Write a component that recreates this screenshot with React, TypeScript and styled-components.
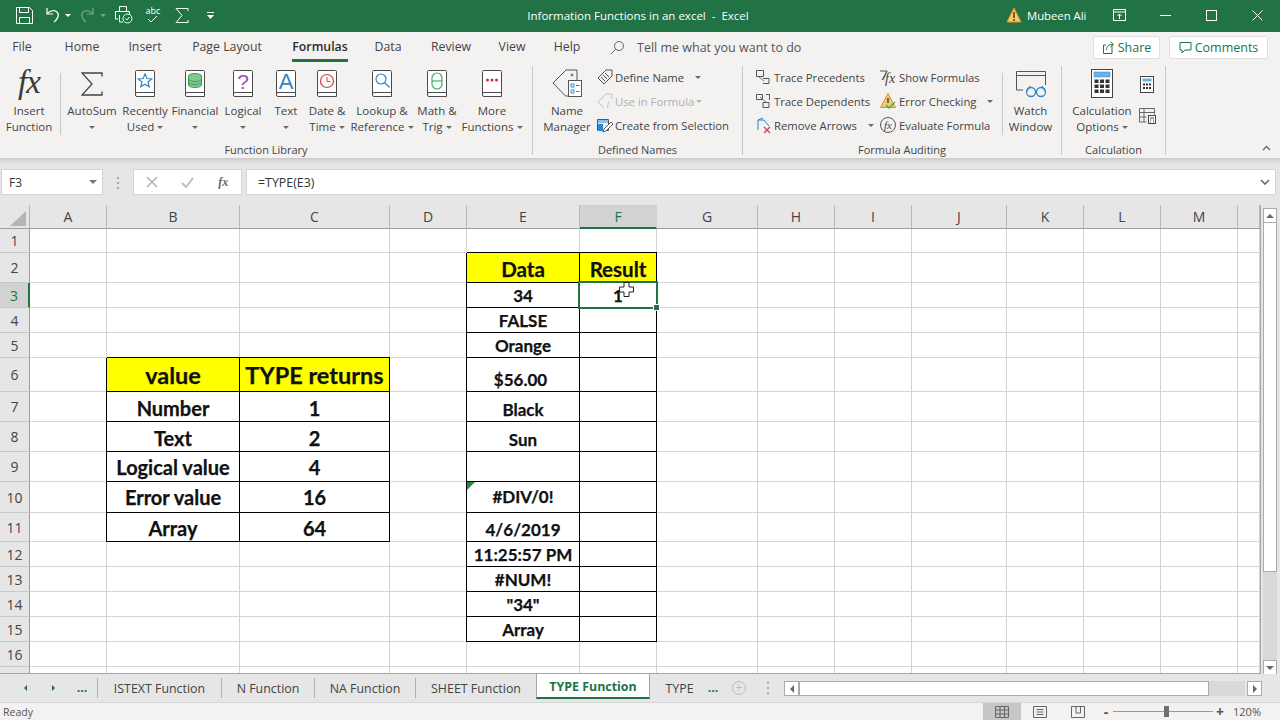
import React from "react";
import styled, { createGlobalStyle } from "styled-components";

const GREEN = "#217346";
const UI = `"Open Sans", "Noto Sans", sans-serif`;

const Global = createGlobalStyle`
  html, body { margin: 0; padding: 0; width: 1280px; height: 720px; overflow: hidden; background: #e6e6e6; }
  * { box-sizing: border-box; }
  svg { display: block; }
`;

const Window = styled.div`
  width: 1280px; height: 720px; display: flex; flex-direction: column;
  font-family: ${UI}; overflow: hidden;
`;

/* ---------- title bar ---------- */
const TitleBar = styled.div`
  height: 32px; background: ${GREEN}; color: #fff; display: flex; align-items: center; flex: none; padding-bottom: 2px;
`;
const Qat = styled.div`
  width: 520px; padding-left: 12px; display: flex; align-items: center; flex: none;
`;
const QatSlot = styled.div<{ $w: number; $ml?: number }>`
  width: ${p => p.$w}px; margin-left: ${p => p.$ml ?? 0}px; height: 24px;
  display: flex; align-items: center; justify-content: center; flex: none;
`;
const Title = styled.div`
  width: 236px; text-align: center; font-size: 11.5px; white-space: pre; flex: none;
`;
const TitleRight = styled.div`
  flex: 1; display: flex; align-items: center; justify-content: flex-end;
`;
const UserName = styled.span`
  font-size: 11.3px; margin: 0 12px 0 5px; width: 58px; white-space: nowrap;
`;
const WinBtn = styled.div`
  width: 45.75px; height: 30px; display: flex; align-items: center; justify-content: center; flex: none;
`;
const MirrorSvg = styled.svg`
  transform: scaleX(-1);
`;

/* ---------- tabs ---------- */
const TabRow = styled.div`
  height: 30px; background: #f3f2f1; display: flex; align-items: stretch; flex: none;
  color: #444; font-size: 12.3px;
`;
const MenuTab = styled.div<{ $w: number }>`
  width: ${p => p.$w}px; display: flex; justify-content: center; flex: none;
`;
const MenuLabel = styled.span<{ $active?: boolean }>`
  display: flex; align-items: center; height: 30px; white-space: nowrap;
  padding-bottom: 1px;
  color: ${p => (p.$active ? "#2b2b2b" : "#444")};
  font-weight: ${p => (p.$active ? 600 : 400)};
  border-bottom: 3px solid ${p => (p.$active ? GREEN : "transparent")};
  border-top: 3px solid transparent;
`;
const TellMe = styled.div`
  display: flex; align-items: center; gap: 12px; margin-left: 18px; color: #555; font-size: 12.5px; white-space: nowrap;
`;
const TopActions = styled.div`
  margin-left: auto; display: flex; align-items: center; gap: 9px; padding: 0 12px 0 0;
`;
const ActionBtn = styled.div<{ $w: number }>`
  width: ${p => p.$w}px; height: 23px; background: #fff; border: 1px solid #e1dfdd; border-radius: 2px;
  display: flex; align-items: center; justify-content: center; gap: 3px;
  color: ${GREEN}; font-size: 12.5px; font-weight: 500; white-space: nowrap;
`;

/* ---------- ribbon ---------- */
const Ribbon = styled.div`
  height: 96px; background: #f3f2f1; display: flex; align-items: stretch; flex: none;
  color: #444; font-size: 11.5px; padding-top: 4px;
`;
const RibbonShadow = styled.div`
  height: 8px; flex: none; background: linear-gradient(#c9c9c9, #dcdcdc 40%, #e6e6e6);
`;
const Group = styled.div<{ $w: number }>`
  width: ${p => p.$w}px; flex: none; display: flex; flex-direction: column;
  border-right: 1px solid #c8c8c8; margin-bottom: 3px;
`;
const GroupBody = styled.div<{ $pl?: number }>`
  height: 77px; display: flex; align-items: flex-start; padding-left: ${p => p.$pl ?? 0}px; flex: none;
`;
const GroupLabel = styled.div`
  flex: 1; text-align: center; font-size: 11px; line-height: 14px; color: #444;
  white-space: nowrap;
`;
const BigBtn = styled.div<{ $w: number }>`
  width: ${p => p.$w}px; flex: none; display: flex; flex-direction: column; align-items: center;
`;
const BigIcon = styled.div`
  height: 32px; display: flex; align-items: flex-end; justify-content: center; margin-bottom: 5px;
`;
const BigText = styled.div`
  line-height: 16px; text-align: center; white-space: nowrap; display: flex; align-items: center; justify-content: center; height: 16px;
`;
const Caret = styled.i<{ $ml?: number; $light?: boolean }>`
  display: inline-block; width: 0; height: 0; flex: none; margin-left: ${p => p.$ml ?? 3}px;
  border-left: 3px solid transparent; border-right: 3px solid transparent;
  border-top: 3px solid ${p => (p.$light ? "#b5b5b5" : "#6a6a6a")};
`;
const WhiteCaret = styled.i`
  display: block; width: 0; height: 0;
  border-left: 3px solid transparent; border-right: 3px solid transparent; border-top: 3px solid #fff;
`;
const DimCaret = styled(WhiteCaret)`
  border-top-color: #6ea88a;
`;
const FxGlyph = styled.span`
  font-family: "Liberation Serif", serif; font-style: italic; font-size: 33px; line-height: 32px; color: #3a3a3a; letter-spacing: -1px;
`;
const InnerSep = styled.div<{ $ml?: number; $mr?: number }>`
  width: 1px; height: 62px; background: #c8c8c8; margin: 7px ${p => p.$mr ?? 0}px 0 ${p => p.$ml ?? 0}px; flex: none;
`;
const SmallCol = styled.div<{ $w: number }>`
  width: ${p => p.$w}px; flex: none; display: flex; flex-direction: column; margin-top: -1px; font-size: 11.3px;
`;
const SmallBtn = styled.div<{ $off?: boolean }>`
  height: 24px; display: flex; align-items: center; white-space: nowrap;
  color: ${p => (p.$off ? "#b0b0b0" : "#444")};
`;
const SmallIcon = styled.div<{ $mr?: number }>`
  width: 18px; height: 18px; margin-right: ${p => p.$mr ?? 1}px; display: flex; align-items: center; justify-content: center; flex: none;
`;
const MiniCol = styled.div`
  width: 20px; display: flex; flex-direction: column; align-items: center; gap: 15px; padding-top: 10px; flex: none; margin-left: -1px;
`;
const Collapse = styled.div`
  margin-left: auto; padding: 79px 9px 0 0;
`;

/* ---------- formula bar ---------- */
const FormulaBar = styled.div`
  height: 39px; background: #e6e6e6; flex: none; display: flex; align-items: flex-start; padding: 3px 4px 0 1px;
`;
const FieldBox = styled.div<{ $w?: number }>`
  height: 26px; background: #fff; border: 1px solid #d4d4d4; display: flex; align-items: center;
  ${p => (p.$w ? `width:${p.$w}px; flex:none;` : "flex:1;")}
`;
const NameText = styled.span`
  font-size: 12px; color: #333; margin-left: 7px; flex: 1;
`;
const Grip = styled.div`
  width: 30px; flex: none; display: flex; flex-direction: column; align-items: center; gap: 3px; padding-top: 8px;
`;
const GripDot = styled.i`
  width: 2px; height: 2px; background: #a8a8a8; display: block;
`;
const FxBtn = styled.div`
  flex: 1; display: flex; justify-content: center;
`;
const FxSmall = styled.span`
  font-family: "Liberation Serif", serif; font-style: italic; font-weight: 700; font-size: 12px; color: #666;
`;
const FormulaText = styled.span`
  font-size: 12.4px; color: #333; margin-left: 11px; flex: 1;
`;
const GripSpacer = styled.span`
  width: 5px; flex: none;
`;
const FormulaGap = styled.div`
  width: 4px; flex: none;
`;

/* ---------- sheet ---------- */
const SheetRow = styled.div`
  height: 469px; flex: none; display: flex;
`;
const GridWrap = styled.div`
  width: 1261px; height: 469px; overflow: hidden; position: relative; flex: none;
  border-right: 1px solid #a6a6a6; border-bottom: 1px solid #a6a6a6;
`;
const Grid = styled.div<{ $cols: string; $rows: string }>`
  display: grid; grid-template-columns: ${p => p.$cols}; grid-template-rows: ${p => p.$rows}; width: 1260px;
`;
const Corner = styled.div`
  background: #e6e6e6; border-right: 1px solid #b4b4b4; border-bottom: 1px solid #9e9e9e; padding: 6px 3px 0 10px;
`;
const ColHead = styled.div<{ $sel?: boolean }>`
  background: ${p => (p.$sel ? "#d2d2d2" : "#e6e6e6")};
  color: ${p => (p.$sel ? GREEN : "#444")};
  border-right: 1px solid ${p => (p.$sel ? "#d2d2d2" : "#b8b8b8")};
  border-bottom: ${p => (p.$sel ? `2px solid ${GREEN}` : "1px solid #9e9e9e")};
  font-size: 14px; display: flex; align-items: center; justify-content: center;
`;
const RowHead = styled.div<{ $sel?: boolean }>`
  background: ${p => (p.$sel ? "#d2d2d2" : "#e6e6e6")};
  color: ${p => (p.$sel ? GREEN : "#444")};
  border-right: ${p => (p.$sel ? `2px solid ${GREEN}` : "1px solid #9e9e9e")};
  border-bottom: 1px solid #c8c8c8;
  font-size: 14px; display: flex; align-items: center; justify-content: center;
`;
const SIZES = { xl: 23.5, lg: 20, md: 20.5, sm: 17 };
const Cell = styled.div<{ $box?: boolean; $yellow?: boolean; $size?: keyof typeof SIZES; $pb?: number; $pr?: number }>`
  position: relative;
  background: ${p => (p.$yellow ? "#ffff00" : "#fff")};
  border-right: 1px solid ${p => (p.$box ? "#000" : "#d4d4d4")};
  border-bottom: 1px solid ${p => (p.$box ? "#000" : "#d4d4d4")};
  ${p => (p.$box ? "box-shadow: 0 -1px 0 #000, -1px 0 0 #000;" : "")}
  font-family: Lato, "Open Sans", sans-serif; font-weight: 700; color: #111;
  -webkit-text-stroke: 0.25px #111;
  font-size: ${p => SIZES[p.$size ?? "sm"]}px; line-height: 1;
  display: flex; align-items: flex-end; justify-content: center; white-space: nowrap;
  padding-bottom: ${p => p.$pb ?? 3}px; padding-right: ${p => p.$pr ?? 0}px;
`;
const Selection = styled.div`
  position: absolute; left: -2px; top: -2px; right: -2px; bottom: -2px; border: 2px solid ${GREEN}; z-index: 3;
`;
const Handle = styled.div`
  position: absolute; right: -4px; bottom: -4px; width: 5px; height: 5px; background: ${GREEN}; border: 1px solid #fff; box-sizing: content-box;
`;
const Cursor = styled.div`
  position: absolute; left: 39px; top: -1px; z-index: 4;
`;
const ErrorMark = styled.div`
  position: absolute; left: 0; top: 0; width: 0; height: 0; z-index: 2;
  border-top: 8px solid #2a8a3c; border-right: 8px solid transparent;
`;

const VScroll = styled.div`
  width: 19px; flex: none; background: #e6e6e6; padding: 3px 3px 0 2px; display: flex; flex-direction: column;
`;
const ScrollBtn = styled.div<{ $w?: number }>`
  height: 15px; ${p => (p.$w ? `width:${p.$w}px;` : "")} background: #fff; border: 1px solid #ababab; flex: none;
  display: flex; align-items: center; justify-content: center;
`;
const VThumb = styled.div`
  height: 349px; background: #fff; border: 1px solid #ababab; border-top: none; flex: none;
`;
const VTrack = styled.div`
  flex: none; height: 88px; background: #d9d9d9;
`;
const Tri = styled.i<{ $dir: "up" | "down" | "left" | "right"; $c?: string; $s?: number }>`
  display: block; width: 0; height: 0;
  ${p => {
    const s = p.$s ?? 4;
    const c = p.$c ?? "#6a6a6a";
    if (p.$dir === "up") return `border-left:${s}px solid transparent;border-right:${s}px solid transparent;border-bottom:${s}px solid ${c};`;
    if (p.$dir === "down") return `border-left:${s}px solid transparent;border-right:${s}px solid transparent;border-top:${s}px solid ${c};`;
    if (p.$dir === "left") return `border-top:${s}px solid transparent;border-bottom:${s}px solid transparent;border-right:${s}px solid ${c};`;
    return `border-top:${s}px solid transparent;border-bottom:${s}px solid transparent;border-left:${s}px solid ${c};`;
  }}
`;

/* ---------- sheet tabs ---------- */
const TabBar = styled.div`
  height: 28px; background: #e6e6e6; flex: none; display: flex; align-items: flex-start;
  color: #444; font-size: 12.4px;
`;
const NavArea = styled.div`
  width: 97px; height: 28px; flex: none; display: flex; align-items: center; padding-left: 22px;
`;
const NavItem = styled.div<{ $w: number }>`
  width: ${p => p.$w}px; height: 28px; flex: none; display: flex; justify-content: center; align-items: center;
  color: ${GREEN}; font-weight: 700; line-height: 12px;
`;
const TabSep = styled.div`
  width: 1px; height: 20px; background: #b0b0b0; flex: none; margin-top: 4px;
`;
const SheetTab = styled.div<{ $w: number; $active?: boolean }>`
  width: ${p => p.$w}px; flex: none; height: 28px; display: flex; align-items: center; justify-content: center; white-space: nowrap;
  ${p => (p.$active ? `background:#fff; color:${GREEN}; font-weight:700; border-bottom:2px solid ${GREEN}; border-left:1px solid #a6a6a6; border-right:1px solid #a6a6a6; margin-top:-1px; height:26px; padding-top:2px;` : "")}
`;
const AddTab = styled.div`
  width: 14px; height: 14px; margin: 7px 0 0 15px; flex: none; border: 1px solid #bdbdbd; border-radius: 50%;
  color: #bdbdbd; display: flex; align-items: center; justify-content: center; font-size: 12px; line-height: 12px;
`;
const HScroll = styled.div`
  margin-left: auto; display: flex; align-items: flex-start; padding: 7px 18px 0 0;
`;
const HGrip = styled.div`
  width: 2px; margin-right: 15px; display: flex; flex-direction: column; gap: 3px; padding-top: 1px;
`;
const HThumb = styled.div`
  width: 410px; height: 15px; background: #fff; border: 1px solid #ababab; flex: none;
`;
const HTrack = styled.div`
  width: 36px; height: 15px; background: #d9d9d9; flex: none; margin-right: 2px;
`;

/* ---------- status ---------- */
const StatusBar = styled.div`
  height: 18px; background: #f3f2f1; flex: none; display: flex; align-items: center; color: #555; font-size: 10.5px;
  border-top: 1px solid #d6d6d6;
`;
const Ready = styled.span`
  margin-left: 3px;
`;
const StatusRight = styled.div`
  margin-left: auto; display: flex; align-items: center; height: 17px; padding-right: 19px;
`;
const ViewBtn = styled.div<{ $w: number; $on?: boolean }>`
  width: ${p => p.$w}px; height: 17px; flex: none; display: flex; align-items: center; justify-content: center;
  background: ${p => (p.$on ? "#c6c6c6" : "transparent")};
`;
const ZoomMark = styled.span<{ $ml?: number }>`
  width: 10px; font-size: 14px; font-weight: 700; color: #555; text-align: center; line-height: 14px; flex: none;
  margin-left: ${p => p.$ml ?? 0}px;
`;
const Slider = styled.div`
  width: 100px; height: 1px; background: #9a9a9a; margin: 0 2px; position: relative; flex: none;
`;
const SliderThumb = styled.div`
  position: absolute; left: 51px; top: -5px; width: 5px; height: 11px; background: #6f6f6f;
`;
const ZoomPct = styled.span`
  margin-left: 8px; font-size: 11px; color: #555;
`;

/* ---------- icons ---------- */
const Book = ({ children }: { children?: React.ReactNode }) => (
  <svg width="22" height="29" viewBox="0 0 22 29">
    <path d="M1.5 26V2.5a1 1 0 0 1 1-1h17a1 1 0 0 1 1 1V27.5H3a1.5 1.5 0 0 1-1.5-1.5z M1.5 25a1.5 1.5 0 0 1 1.5-1.5h17.5" fill="#fff" stroke="#4a4a4a" />
    {children}
  </svg>
);
const QatSave = () => (
  <svg width="17" height="17" viewBox="0 0 17 17" fill="none" stroke="#fff"><path d="M.5.5h13l3 3v13H.5z" /><path d="M3.5.5v5h9v-5M3.5 16.5v-6h10v6" /></svg>
);
const QatUndo = ({ c = "#fff" }: { c?: string }) => (
  <svg width="16" height="16" viewBox="0 0 16 16" fill="none" stroke={c} strokeWidth="1.2"><path d="M2 1v6h6" /><path d="M2 7c3-4 8-4 10-2s2 6-3 10" /></svg>
);
const QatPrint = () => (
  <svg width="18" height="18" viewBox="0 0 18 18" fill="none" stroke="#fff"><path d="M4.5 5V.5h7V5M3 13H.5V5.5h14V8M4.5 9v7H8" /><circle cx="12.5" cy="12.5" r="4.5" /><path d="M10.5 12.5l1.5 1.5 2.5-3" /></svg>
);
const QatSpell = () => (
  <svg width="20" height="20" viewBox="0 0 20 20">
    <text x="10" y="9" textAnchor="middle" fontFamily="Open Sans" fontSize="9" fill="#fff">abc</text>
    <path d="M5 14l3 3 6-6" fill="none" stroke="#fff" />
  </svg>
);
const QatSum = () => (
  <svg width="14" height="15" viewBox="0 0 14 15" fill="none" stroke="#fff"><path d="M13 3V.5H1l6 7-6 7h12V12" /></svg>
);
const QatMore = () => (
  <svg width="7" height="7" viewBox="0 0 7 7" fill="#fff"><rect y="0" width="7" height="1" /><path d="M0 3h7L3.5 7z" /></svg>
);

const S = ({ children }: { children: React.ReactNode }) => (
  <svg width="18" height="18" viewBox="0 0 18 18" fill="none" stroke="#555">{children}</svg>
);

const COL_W = [30, 77, 133, 150, 77, 113, 77, 101, 77, 77, 95, 77, 77, 77, 22];
const COLS = ["A", "B", "C", "D", "E", "F", "G", "H", "I", "J", "K", "L", "M", ""];
const ROW_H = [24, 30, 25, 25, 25, 34, 30, 30, 30, 31, 29, 25, 25, 25, 25, 25, 25];

type C = { v?: string; y?: boolean; s?: keyof typeof SIZES; pb?: number; pr?: number };
const CELLS: Record<string, C> = {
  E2: { v: "Data", y: true, s: "md", pb: 3 }, F2: { v: "Result", y: true, s: "md", pb: 3 },
  E3: { v: "34", pb: 3 }, F3: { v: "1", pb: 3 }, E4: { v: "FALSE" }, F4: {}, E5: { v: "Orange" }, F5: {},
  E6: { v: "$56.00", pb: 3, pr: 5 }, F6: {}, E7: { v: "Black" }, F7: {}, E8: { v: "Sun" }, F8: {}, E9: {}, F9: {},
  E10: { v: "#DIV/0!", pb: 7 }, F10: {}, E11: { v: "4/6/2019", pb: 3 }, F11: {}, E12: { v: "11:25:57 PM" }, F12: {},
  E13: { v: "#NUM!" }, F13: {}, E14: { v: "\"34\"" }, F14: {}, E15: { v: "Array" }, F15: {},
  B6: { v: "value", y: true, s: "xl", pb: 4 }, C6: { v: "TYPE returns", y: true, s: "xl", pb: 4 },
  B7: { v: "Number", s: "lg", pb: 3 }, C7: { v: "1", s: "lg", pb: 3 },
  B8: { v: "Text", s: "lg", pb: 3 }, C8: { v: "2", s: "lg", pb: 3 },
  B9: { v: "Logical value", s: "lg", pb: 4 }, C9: { v: "4", s: "lg", pb: 4 },
  B10: { v: "Error value", s: "lg", pb: 5 }, C10: { v: "16", s: "lg", pb: 5 },
  B11: { v: "Array", s: "lg", pb: 3 }, C11: { v: "64", s: "lg", pb: 3 },
};

const Big = ({ w, icon, l1, l2, caret2 }: { w: number; icon: React.ReactNode; l1: string; l2?: string; caret2?: boolean }) => (
  <BigBtn $w={w}>
    <BigIcon>{icon}</BigIcon>
    <BigText>{l1}</BigText>
    <BigText>{l2}{caret2 && <Caret $ml={l2 ? 3 : 0} />}</BigText>
  </BigBtn>
);

export default function App() {
  return (
    <Window>
      <Global />
      <TitleBar>
        <Qat>
          <QatSlot $w={24}><QatSave /></QatSlot>
          <QatSlot $w={24} $ml={5}><QatUndo /></QatSlot>
          <QatSlot $w={6}><WhiteCaret /></QatSlot>
          <QatSlot $w={24} $ml={4}><MirrorSvg width="16" height="16" viewBox="0 0 16 16"><path d="M2 1v6h6M2 7c3-4 8-4 10-2s2 6-3 10" fill="none" stroke="#6ea88a" strokeWidth="1.2" /></MirrorSvg></QatSlot>
          <QatSlot $w={6} $ml={1}><DimCaret /></QatSlot>
          <QatSlot $w={24} $ml={6}><QatPrint /></QatSlot>
          <QatSlot $w={24} $ml={5}><QatSpell /></QatSlot>
          <QatSlot $w={24} $ml={5}><QatSum /></QatSlot>
          <QatSlot $w={24} $ml={4}><QatMore /></QatSlot>
        </Qat>
        <Title>{"Information Functions in an excel  -  Excel"}</Title>
        <TitleRight>
          <svg width="16" height="16" viewBox="0 0 16 16"><path d="M8 1l7 14H1z" fill="#f3c969" stroke="#d9932b" /><path d="M8 5v6M8 12v2" stroke="#5a3a10" strokeWidth="1.5" /></svg>
          <UserName>Mubeen Ali</UserName>
          <WinBtn><svg width="13" height="12" viewBox="0 0 13 12" fill="none" stroke="#fff"><path d="M.5.5h12v11H.5zM.5 3h12M6.5 10V5M4.5 7l2-2 2 2" /></svg></WinBtn>
          <WinBtn><svg width="11" height="1" viewBox="0 0 11 1"><rect width="11" height="1" fill="#fff" /></svg></WinBtn>
          <WinBtn><svg width="11" height="11" viewBox="0 0 11 11" fill="none" stroke="#fff"><rect x=".5" y=".5" width="10" height="10" /></svg></WinBtn>
          <WinBtn><svg width="11" height="11" viewBox="0 0 11 11" stroke="#fff"><path d="M.5.5l10 10M10.5.5l-10 10" /></svg></WinBtn>
        </TitleRight>
      </TitleBar>

      <TabRow>
        <MenuTab $w={44}><MenuLabel>File</MenuLabel></MenuTab>
        <MenuTab $w={76}><MenuLabel>Home</MenuLabel></MenuTab>
        <MenuTab $w={50}><MenuLabel>Insert</MenuLabel></MenuTab>
        <MenuTab $w={114}><MenuLabel>Page Layout</MenuLabel></MenuTab>
        <MenuTab $w={72}><MenuLabel $active>Formulas</MenuLabel></MenuTab>
        <MenuTab $w={64}><MenuLabel>Data</MenuLabel></MenuTab>
        <MenuTab $w={62}><MenuLabel>Review</MenuLabel></MenuTab>
        <MenuTab $w={60}><MenuLabel>View</MenuLabel></MenuTab>
        <MenuTab $w={50}><MenuLabel>Help</MenuLabel></MenuTab>
        <TellMe>
          <svg width="15" height="15" viewBox="0 0 15 15" fill="none" stroke="#666"><circle cx="9" cy="6" r="4.5" /><path d="M5.8 9.2L1 14" /></svg>
          Tell me what you want to do
        </TellMe>
        <TopActions>
          <ActionBtn $w={67}>
            <svg width="13" height="13" viewBox="0 0 13 13" fill="none" stroke={GREEN}><path d="M10 4.5v8H1.5V4H4" /><path d="M4.5 9c0-4 2.5-5.5 6-5.5M8.5 1l3 2.5-3 2.5" /></svg>
            Share
          </ActionBtn>
          <ActionBtn $w={99}>
            <svg width="13" height="13" viewBox="0 0 13 13" fill="none" stroke={GREEN}><path d="M1 1.5h11v7.5H6l-3 3V9H1z" /></svg>
            Comments
          </ActionBtn>
        </TopActions>
      </TabRow>

      <Ribbon>
        <Group $w={533}>
          <GroupBody>
            <Big w={58} icon={<FxGlyph>fx</FxGlyph>} l1="Insert" l2="Function" />
            <InnerSep $ml={2} $mr={3} />
            <Big w={56} icon={<svg width="22" height="26" viewBox="0 0 22 26" fill="none" stroke="#444" strokeWidth="1.3"><path d="M21 4.5V1H1l10 11L1 23h20v-3.5" /></svg>} l1="AutoSum" caret2 />
            <Big w={50} icon={<Book><path d="M11 5l1.9 4.5 4.8.4-3.7 3.1 1.2 4.7-4.2-2.5-4.2 2.5 1.2-4.7L4.3 9.9l4.8-.4z" fill="#fff" stroke="#2e86c8" strokeWidth="1.2" /></Book>} l1="Recently" l2="Used" caret2 />
            <Big w={50} icon={<Book><g fill="#7fc98f" stroke="#3d9a56"><ellipse cx="11" cy="7" rx="6.5" ry="2.5" /><path d="M4.5 7v9c0 1.4 3 2.500 6.500 2.500s6.500-1.100 6.500-2.500V7" /><path d="M4.500 10c0 1.400 3 2.500 6.500 2.500s6.500-1.100 6.500-2.500M4.500 13c0 1.400 3 2.500 6.500 2.500s6.500-1.100 6.500-2.500" fill="none" /></g></Book>} l1="Financial" caret2 />
            <Big w={46} icon={<Book><text x="11" y="20" textAnchor="middle" fontFamily="Liberation Sans" fontSize="21" fill="#a349b8">?</text></Book>} l1="Logical" caret2 />
            <Big w={40} icon={<Book><text x="11" y="20" textAnchor="middle" fontFamily="Liberation Sans" fontSize="22" fill="#2e86c8">A</text></Book>} l1="Text" caret2 />
            <Big w={42} icon={<Book><circle cx="11" cy="12" r="6.500" fill="#fff" stroke="#d23f4a" strokeWidth="1.2" /><path d="M11 8v4.500h3.500" fill="none" stroke="#d23f4a" /></Book>} l1="Date &" l2="Time" caret2 />
            <Big w={68} icon={<Book><circle cx="10" cy="10" r="5" fill="none" stroke="#2e86c8" strokeWidth="1.2" /><path d="M13.500 13.500l5 5" stroke="#2e86c8" strokeWidth="1.3" /></Book>} l1="Lookup &" l2="Reference" caret2 />
            <Big w={42} icon={<Book><rect x="6" y="4" width="10" height="16" rx="5" fill="none" stroke="#3fae62" strokeWidth="1.2" /><path d="M6 12h10" stroke="#3fae62" strokeWidth="1.2" /></Book>} l1="Math &" l2="Trig" caret2 />
            <Big w={68} icon={<Book><g fill="#c8323c"><circle cx="6.500" cy="11" r="1.500" /><circle cx="11" cy="11" r="1.500" /><circle cx="15.500" cy="11" r="1.500" /></g></Book>} l1="More" l2="Functions" caret2 />
          </GroupBody>
          <GroupLabel>Function Library</GroupLabel>
        </Group>

        <Group $w={210}>
          <GroupBody $pl={5}>
            <Big w={58} icon={
              <svg width="32" height="30" viewBox="0 0 32 30" fill="none" stroke="#555"><path d="M2 15L15 2h11v10M21 28H14.500L2 15" /><circle cx="21" cy="7" r="1" /><rect x="17.500" y="12.500" width="13" height="16" fill="#fff" /><path d="M20 16h3v3h-3zM20 22h3v3h-3z" stroke="#2e86c8" /><path d="M25 17.500h3.500M25 23.500h3.500" stroke="#2e86c8" /></svg>
            } l1="Name" l2="Manager" />
            <SmallCol $w={140}>
              <SmallBtn><SmallIcon><S><path d="M2 10L10 2h6v6l-8 8z" /><path d="M5 9l4 4M7 7l4 4M9 5l4 4" /></S></SmallIcon>Define Name<Caret $ml={11} /></SmallBtn>
              <SmallBtn $off><SmallIcon><S><g stroke="#c0c0c0"><path d="M2 10L10 2h6v5M8 16l-6-6" /><path d="M11 16c1 0 1-6 2-7" /></g></S></SmallIcon>Use in Formula<Caret $ml={2} $light /></SmallBtn>
              <SmallBtn><SmallIcon><S><path d="M1.500 3.500h11v11h-11z" stroke="#555" /><rect x="2" y="8" width="5" height="7" fill="#2e86c8" stroke="none" /><rect x="2" y="4" width="10" height="3" fill="#8cc0e8" stroke="none" /><path d="M8 13l7-7 2 2-7 7-3 1z" fill="#fff" /></S></SmallIcon>Create from Selection</SmallBtn>
            </SmallCol>
          </GroupBody>
          <GroupLabel>Defined Names</GroupLabel>
        </Group>

        <Group $w={319}>
          <GroupBody $pl={11}>
            <SmallCol $w={125}>
              <SmallBtn><SmallIcon $mr={2}><S><path d="M2.500 2.500h7v6h-7zM9 10.500h6v5H9" /><path d="M5 9l5 4" stroke="#2e86c8" /></S></SmallIcon>Trace Precedents</SmallBtn>
              <SmallBtn><SmallIcon $mr={2}><S><path d="M2.500 2.500h6v5h-6zM9 10.500h6v5H9zM12 2.500h3.500V8" /><path d="M6 5l6 5" stroke="#2e86c8" /></S></SmallIcon>Trace Dependents</SmallBtn>
              <SmallBtn><SmallIcon $mr={2}><S><path d="M4 14V4l5-2M4 4h6l5 6" stroke="#2e86c8" /><path d="M10 11l6 6M16 11l-6 6" stroke="#d23f4a" strokeWidth="1.3" /></S></SmallIcon>Remove Arrows<Caret $ml={11} /></SmallBtn>
            </SmallCol>
            <SmallCol $w={123}>
              <SmallBtn><SmallIcon $mr={2}><S><path d="M1 3h7l-5 9M8 3L4 12" /><text x="6" y="15" fontFamily="Liberation Serif" fontStyle="italic" fontSize="14" fill="#444" stroke="none">fx</text></S></SmallIcon>Show Formulas</SmallBtn>
              <SmallBtn><SmallIcon $mr={2}><S><path d="M9 1.500l7.500 14h-15z" fill="#f3c969" stroke="#d9932b" /><path d="M9 6v5" stroke="#444" strokeWidth="1.5" /><path d="M7 13l3 3 6-6" stroke="#3fae62" strokeWidth="1.4" /></S></SmallIcon>Error Checking<Caret $ml={10} /></SmallBtn>
              <SmallBtn><SmallIcon $mr={2}><S><circle cx="9" cy="9" r="7.500" /><text x="9" y="13" textAnchor="middle" fontFamily="Liberation Serif" fontStyle="italic" fontSize="11" fill="#444" stroke="none">fx</text></S></SmallIcon>Evaluate Formula</SmallBtn>
            </SmallCol>
            <InnerSep />
            <Big w={55} icon={
              <svg width="32" height="28" viewBox="0 0 32 28" fill="none" stroke="#555"><path d="M1.500 20V1.500h29V15M1.500 5.500h29M1.500 20H8" /><g stroke="#2e86c8" strokeWidth="1.3"><circle cx="16" cy="22" r="4.500" /><circle cx="26" cy="22" r="4.500" /><path d="M20.500 21h1M12 21l3-5M30 21l-3-5" /></g></svg>
            } l1="Watch" l2="Window" />
          </GroupBody>
          <GroupLabel>Formula Auditing</GroupLabel>
        </Group>

        <Group $w={104}>
          <GroupBody $pl={4}>
            <Big w={72} icon={
              <svg width="22" height="29" viewBox="0 0 22 29"><rect x=".5" y=".5" width="21" height="28" fill="#fff" stroke="#444" /><rect x="3" y="3" width="16" height="5" fill="#6fb0e0" stroke="#2e86c8" strokeWidth=".5" /><g fill="#333">{[10.500, 15.500, 20.500].flatMap(y => [3.500, 9, 14.500].map(x => <rect key={`${x}-${y}`} x={x} y={y} width="4" height="3.500" />))}</g></svg>
            } l1="Calculation" l2="Options" caret2 />
            <MiniCol>
              <svg width="14" height="17" viewBox="0 0 14 17"><rect x=".5" y=".5" width="13" height="16" fill="#fff" stroke="#444" /><rect x="2.500" y="2.500" width="9" height="3" fill="#6fb0e0" /><path d="M3 7.500h2v2H3zM6 7.500h2v2H6zM9 7.500h2v2H9zM3 11h2v2H3zM6 11h2v2H6zM9 11h2v2H9z" fill="#333" /></svg>
              <svg width="17" height="16" viewBox="0 0 17 16" fill="none" stroke="#666"><path d="M.5.500h15v6M.5.500V14h7M.5 4.500h15M5 .500V14M.5 9h7" /><rect x="9.500" y="7.500" width="7" height="8" fill="#fff" stroke="#444" /><path d="M11 10h4M11 12h1M14 12h1M11 14h1M14 14h1" stroke="#444" /></svg>
            </MiniCol>
          </GroupBody>
          <GroupLabel>Calculation</GroupLabel>
        </Group>
        <Collapse><svg width="9" height="6" viewBox="0 0 9 6" fill="none" stroke="#666" strokeWidth="1.4"><path d="M1 5l3.500-3.500L8 5" /></svg></Collapse>
      </Ribbon>
      <RibbonShadow />

      <FormulaBar>
        <FieldBox $w={102}>
          <NameText>F3</NameText>
          <Tri $dir="down" $s={4} $c="#777" />
          <GripSpacer />
        </FieldBox>
        <Grip><GripDot /><GripDot /><GripDot /></Grip>
        <FieldBox $w={109}>
          <FxBtn><svg width="12" height="12" viewBox="0 0 12 12" stroke="#b4b4b4" strokeWidth="1.5"><path d="M1 1l10 10M11 1L1 11" /></svg></FxBtn>
          <FxBtn><svg width="13" height="11" viewBox="0 0 13 11" fill="none" stroke="#bdbdbd" strokeWidth="2"><path d="M1 6l4 4 7-9" /></svg></FxBtn>
          <FxBtn><FxSmall>fx</FxSmall></FxBtn>
        </FieldBox>
        <FormulaGap />
        <FieldBox>
          <FormulaText>=TYPE(E3)</FormulaText>
          <svg width="10" height="6" viewBox="0 0 10 6" fill="none" stroke="#666" strokeWidth="1.6"><path d="M1 1l4 4 4-4" /></svg>
          <GripSpacer />
        </FieldBox>
      </FormulaBar>

      <SheetRow>
        <GridWrap>
          <Grid $cols={COL_W.map(w => `${w}px`).join(" ")} $rows={[24, ...ROW_H].map(h => `${h}px`).join(" ")}>
            <Corner><svg width="16" height="15" viewBox="0 0 16 15"><path d="M16 0v15H0z" fill="#b5b5b5" /></svg></Corner>
            {COLS.map((c, i) => <ColHead key={i} $sel={c === "F"}>{c}</ColHead>)}
            {ROW_H.map((_, r) => {
              const row = r + 1;
              return (
                <React.Fragment key={row}>
                  <RowHead $sel={row === 3}>{row}</RowHead>
                  {COLS.map((c, i) => {
                    const d = CELLS[`${c}${row}`];
                    return (
                      <Cell key={i} $box={!!d} $yellow={d?.y} $size={d?.s} $pb={d?.pb} $pr={d?.pr}>
                        {d?.v}
                        {c === "E" && row === 10 && <ErrorMark />}
                        {c === "F" && row === 3 && (
                          <>
                            <Selection><Handle /></Selection>
                            <Cursor>
                              <svg width="15" height="15" viewBox="0 0 15 15"><path d="M5 .5h5v4.500h4.500v5H10v4.500H5V10H.5V5H5z" fill="#fff" stroke="#222" /></svg>
                            </Cursor>
                          </>
                        )}
                      </Cell>
                    );
                  })}
                </React.Fragment>
              );
            })}
          </Grid>
        </GridWrap>
        <VScroll>
          <ScrollBtn><Tri $dir="up" /></ScrollBtn>
          <VThumb />
          <VTrack />
          <ScrollBtn><Tri $dir="down" /></ScrollBtn>
        </VScroll>
      </SheetRow>

      <TabBar>
        <NavArea>
          <NavItem $w={6}><Tri $dir="left" $c={GREEN} $s={3} /></NavItem>
          <NavItem $w={22} />
          <NavItem $w={6}><Tri $dir="right" $c={GREEN} $s={3} /></NavItem>
          <NavItem $w={22} />
          <NavItem $w={8}>...</NavItem>
        </NavArea>
        <TabSep />
        <SheetTab $w={123}>ISTEXT Function</SheetTab>
        <TabSep />
        <SheetTab $w={92}>N Function</SheetTab>
        <TabSep />
        <SheetTab $w={100}>NA Function</SheetTab>
        <TabSep />
        <SheetTab $w={120}>SHEET Function</SheetTab>
        <SheetTab $w={114} $active>TYPE Function</SheetTab>
        <SheetTab $w={59}>TYPE</SheetTab>
        <NavItem $w={8}>...</NavItem>
        <AddTab>+</AddTab>
        <HScroll>
          <HGrip><GripDot /><GripDot /><GripDot /></HGrip>
          <ScrollBtn $w={15}><Tri $dir="left" /></ScrollBtn>
          <HThumb />
          <HTrack />
          <ScrollBtn $w={15}><Tri $dir="right" /></ScrollBtn>
        </HScroll>
      </TabBar>

      <StatusBar>
        <Ready>Ready</Ready>
        <StatusRight>
          <ViewBtn $w={38} $on><svg width="14" height="12" viewBox="0 0 14 12" fill="none" stroke="#666"><path d="M.5.500h13v11H.5zM.5 4h13M.5 8h13M5 .500v11M9.500 .500v11" /></svg></ViewBtn>
          <ViewBtn $w={38}><svg width="14" height="12" viewBox="0 0 14 12" fill="none" stroke="#666"><path d="M.5.500h13v11H.5zM3.500 3.500h7M3.500 6h7M3.500 8.500h7" /></svg></ViewBtn>
          <ViewBtn $w={38}><svg width="14" height="12" viewBox="0 0 14 12" fill="none" stroke="#666"><path d="M.5.500h13v11H.5zM5 .500V7h4.500V.500" /></svg></ViewBtn>
          <ZoomMark $ml={4}>-</ZoomMark>
          <Slider><SliderThumb /></Slider>
          <ZoomMark>+</ZoomMark>
          <ZoomPct>120%</ZoomPct>
        </StatusRight>
      </StatusBar>
    </Window>
  );
}
